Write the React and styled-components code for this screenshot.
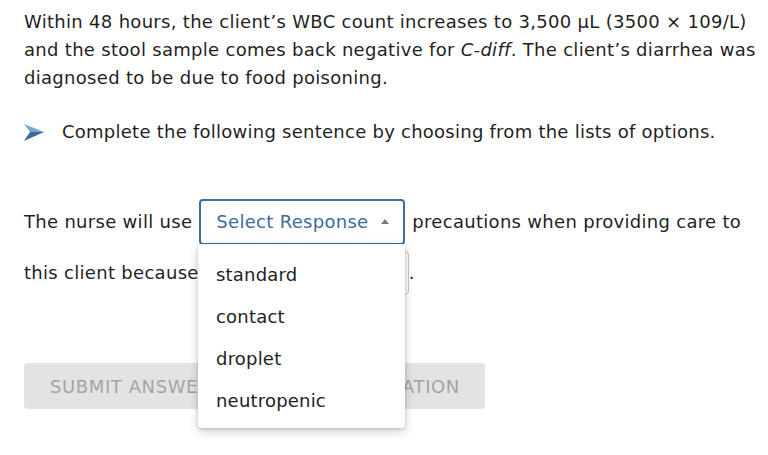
import React from "react";
import styled, { createGlobalStyle } from "styled-components";

const GlobalStyle = createGlobalStyle`
  html, body {
    margin: 0;
    padding: 0;
    background: #fff;
  }
  body {
    font-family: "DejaVu Sans", Verdana, sans-serif;
    color: #1f1f1f;
    -webkit-font-smoothing: antialiased;
  }
`;

const Page = styled.div`
  width: 768px;
  height: 455px;
  box-sizing: border-box;
  padding: 8px 8px 0 24px;
  overflow: hidden;
  position: relative;
`;

const Stem = styled.p`
  margin: 0;
  font-size: 18px;
  line-height: 28px;
  letter-spacing: 0.3px;
`;

const Instruction = styled.div`
  display: flex;
  align-items: center;
  gap: 18px;
  margin-top: 26px;
  font-size: 18px;
  line-height: 28px;
  letter-spacing: 0.25px;
`;

const Sentence = styled.div`
  margin-top: 50px;
  font-size: 18px;
  letter-spacing: 0.3px;
  position: relative;
`;

const Line = styled.div`
  display: flex;
  align-items: center;
  height: 51px;
  gap: ${p => p.gap}px;
  white-space: nowrap;
`;

const SelectBox = styled.div`
  box-sizing: border-box;
  display: flex;
  align-items: center;
  justify-content: space-between;
  flex: none;
  width: ${p => p.width}px;
  height: ${p => (p.open ? 46 : 44)}px;
  padding: 0 14px 0 15px;
  border: ${p => (p.open ? "2px solid #3f6f9d" : "1px solid #c9c9c9")};
  border-radius: 4px;
  color: #3c6c9c;
  background: #fff;
`;

const Caret = styled.span`
  width: 0;
  height: 0;
  border-left: 4px solid transparent;
  border-right: 4px solid transparent;
  border-bottom: 5px solid #7a7a7a;
`;

const Menu = styled.ul`
  position: absolute;
  top: 48px;
  left: 174px;
  width: 207px;
  margin: 0;
  padding: 9px 0 7px;
  list-style: none;
  background: #fff;
  border-radius: 4px;
  box-shadow: 0 3px 10px rgba(0, 0, 0, 0.22), 0 1px 3px rgba(0, 0, 0, 0.12);
  z-index: 2;
`;

const Option = styled.li`
  height: 42px;
  display: flex;
  align-items: center;
  padding-left: 18px;
  font-size: 18px;
  letter-spacing: 0.2px;
  color: #222;
`;

const Actions = styled.div`
  display: flex;
  gap: 10px;
  margin-top: 65px;
`;

const ActionButton = styled.button`
  height: 46px;
  padding: 0 25px 0 26px;
  border: none;
  border-radius: 4px;
  background: #e3e3e3;
  color: #a3a3a3;
  font-family: "DejaVu Sans", Verdana, sans-serif;
  font-size: 18px;
  letter-spacing: 0.6px;
  cursor: default;
  white-space: nowrap;
`;

const PointerIcon = () => (
  <svg width="20" height="20" viewBox="0 0 20 20">
    <polygon points="0,2 20,10 6,10" fill="#79a7d3" />
    <polygon points="6,10 20,10 0,19" fill="#3b6a98" />
  </svg>
);

const options = ["standard", "contact", "droplet", "neutropenic"];

const App = () => (
  <>
    <GlobalStyle />
    <Page>
      <Stem>
        Within 48 hours, the client’s WBC count increases to 3,500 µL (3500 × 109/L)
        and the stool sample comes back negative for <i>C-diff</i>. The client’s diarrhea was
        diagnosed to be due to food poisoning.
      </Stem>
      <Instruction>
        <PointerIcon />
        <span>Complete the following sentence by choosing from the lists of options.</span>
      </Instruction>
      <Sentence>
        <Line gap={7}>
          <span>The nurse will use</span>
          <SelectBox open width={206}>
            <span>Select Response</span>
            <Caret />
          </SelectBox>
          <span>precautions when providing care to</span>
        </Line>
        <Line gap={0}>
          <span>this client because</span>
          <SelectBox width={210}>
            <span />
          </SelectBox>
          <span>.</span>
        </Line>
        <Menu>
          {options.map(item => (
            <Option key={item}>{item}</Option>
          ))}
        </Menu>
      </Sentence>
      <Actions>
        <ActionButton>SUBMIT ANSWER</ActionButton>
        <ActionButton>VIEW EXPLANATION</ActionButton>
      </Actions>
    </Page>
  </>
);

export default App;
